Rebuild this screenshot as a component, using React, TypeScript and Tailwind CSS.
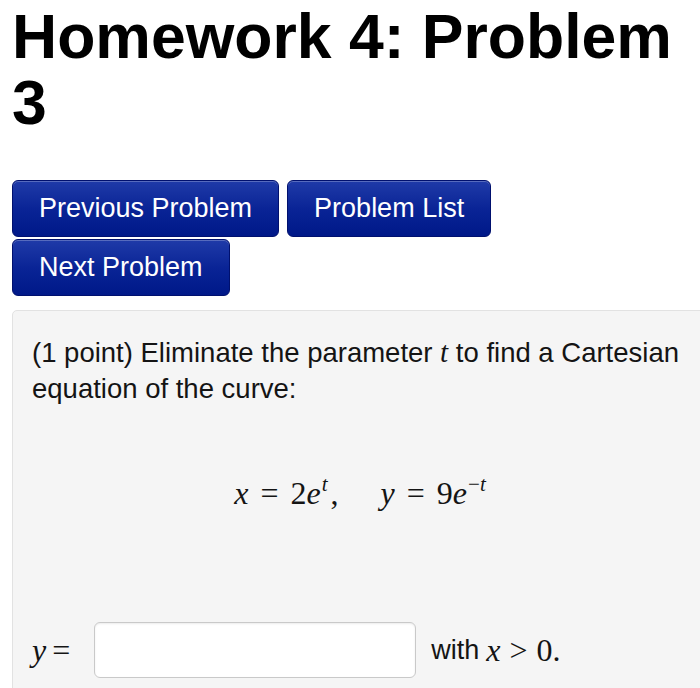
import React from "react";

const sans = { fontFamily: '"Liberation Sans", Arial, sans-serif' };

function NavButton({ children }: { children: React.ReactNode }) {
  return (
    <button
      type="button"
      className="flex h-[57px] items-center rounded-[6px] border border-[#00106e] bg-gradient-to-b from-[#1f3aa8] via-[#0a2496] to-[#001888] px-[26px] text-[27px] text-white shadow-[inset_0_1px_0_rgba(255,255,255,0.25)]"
    >
      {children}
    </button>
  );
}

function V({ children }: { children: React.ReactNode }) {
  return <span className="italic">{children}</span>;
}

export default function App() {
  return (
    <div className="h-[688px] w-[700px] overflow-hidden bg-white text-[#141414]" style={sans}>
      <h1 className="ml-[12px] mt-[3px] text-[62.5px] font-bold leading-[66px] text-black">
        Homework 4: Problem 3
      </h1>

      <div className="ml-[12px] mt-[45px] flex w-[490px] flex-wrap gap-x-[8px] gap-y-[2px]">
        <NavButton>Previous Problem</NavButton>
        <NavButton>Problem List</NavButton>
        <NavButton>Next Problem</NavButton>
      </div>

      <div className="ml-[12px] mr-[-8px] mt-[14px] h-[400px] rounded-[5px] border border-[#e2e2e2] bg-[#f5f5f5] px-[19px] pt-[23px]">
        <p className="text-[27.5px] leading-[36px]">
          (1 point) Eliminate the parameter{" "}
          <span className="font-['Liberation_Serif'] text-[29px] italic">t</span> to find a Cartesian
          equation of the curve:
        </p>

        <div className="mt-[68px] flex justify-center font-['Liberation_Serif',serif] text-[32px] leading-[36px]">
          <span>
            <V>x</V>
            <span className="mx-[12px]">=</span>
            2<V>e</V>
            <sup className="top-[-13px] ml-[1px] text-[21px] italic">t</sup>
            <span className="ml-[3px]">,</span>
          </span>
          <span className="ml-[42px]">
            <V>y</V>
            <span className="mx-[12px]">=</span>
            9<V>e</V>
            <sup className="top-[-13px] ml-[1px] text-[21px]">
              −<span className="italic">t</span>
            </sup>
          </span>
        </div>

        <div className="mt-[111px] flex items-center">
          <span className="font-['Liberation_Serif',serif] text-[32px]">
            <V>y</V>
            <span className="ml-[6px]">=</span>
          </span>
          <input
            type="text"
            className="ml-[24px] h-[56px] w-[322px] rounded-[6px] border border-[#c9c9c9] bg-white shadow-[inset_0_1px_2px_rgba(0,0,0,0.08)] outline-none"
          />
          <span className="ml-[15px] text-[27px]">with</span>
          <span className="ml-[7px] font-['Liberation_Serif',serif] text-[32px]">
            <V>x</V>
            <span className="mx-[9px]">&gt;</span>
            0.
          </span>
        </div>
      </div>
    </div>
  );
}
